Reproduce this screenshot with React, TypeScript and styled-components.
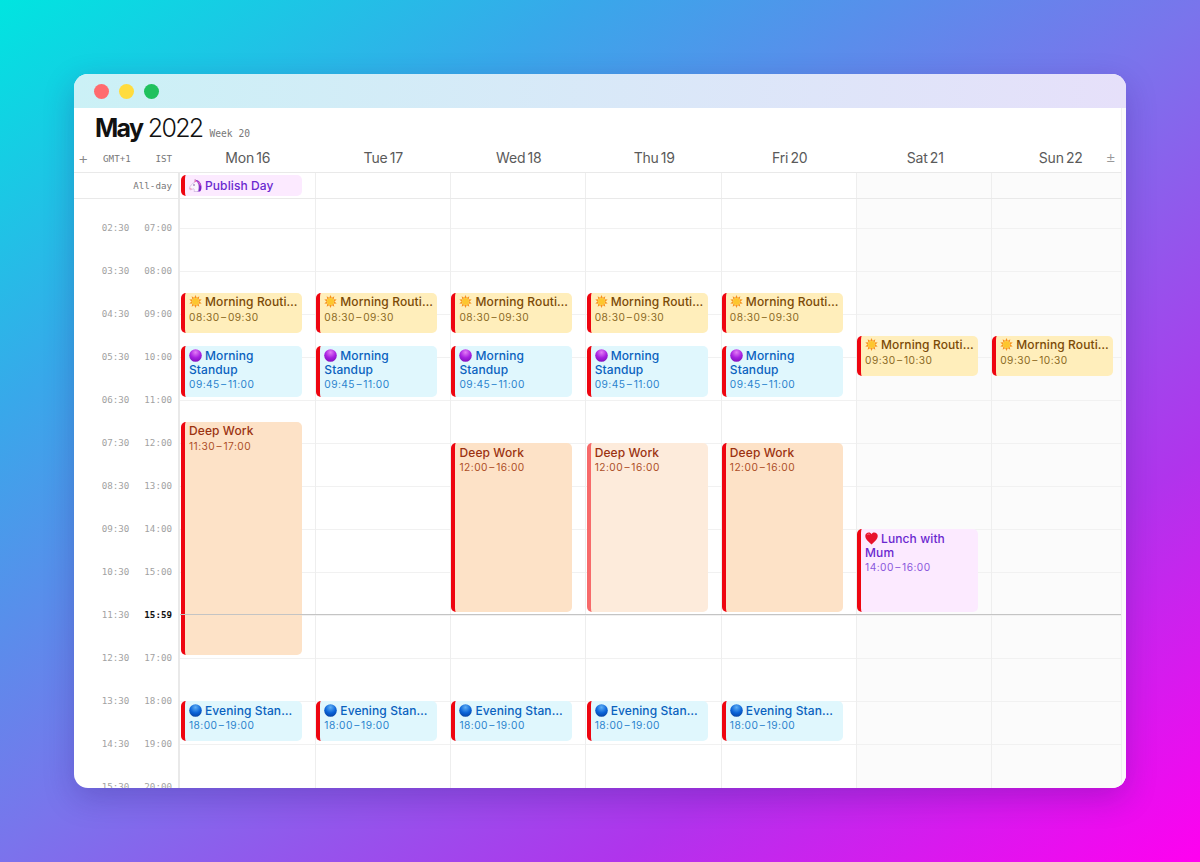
import React from "react";
import styled, { createGlobalStyle } from "styled-components";

const Global = createGlobalStyle`
  html, body { margin: 0; padding: 0; height: 100%; }
  body {
    width: 1200px; height: 862px; overflow: hidden;
    background: linear-gradient(145deg, #00e5e0 0%, #38a8ea 24%, #7a74ec 50%, #b034ec 76%, #ff00f0 100%);
    font-family: Inter, "Liberation Sans", sans-serif;
  }
`;
const Page = styled.div`
  width: 1200px; height: 862px; padding: 74px; box-sizing: border-box;
`;
const Win = styled.div`
  position: relative; width: 1052px; height: 714px; border-radius: 14px; overflow: hidden; background: #fff;
  display: flex; flex-direction: column;
  box-shadow: 0 10px 30px rgba(40, 20, 120, 0.25);
`;
const TitleBar = styled.div`
  height: 34px; flex: none; display: flex; align-items: center; gap: 10px; padding-left: 20px;
  background: linear-gradient(95deg, #cbf1f6, #e6e0fa);
`;
const Light = styled.span<{ $c: string }>`
  width: 15px; height: 15px; border-radius: 50%; background: ${(p) => p.$c};
`;
const Heading = styled.div`
  height: 37px; flex: none; display: flex; align-items: baseline; padding: 4px 0 0 21px; box-sizing: border-box;
  color: #111; font-size: 25px; line-height: 32px; letter-spacing: -1.7px;
`;
const Month = styled.span`font-weight: 700; margin-right: 5.5px;`;
const Year = styled.span`font-weight: 350;`;
const WeekNo = styled.span`
  font-family: "DejaVu Sans Mono", monospace; font-size: 9.6px; letter-spacing: 0; color: #777; margin-left: 7px;
`;
const HeaderRow = styled.div`
  height: 27px; flex: none; display: flex; border-bottom: 1px solid #e9e9e9; position: relative; overflow: hidden;
`;
const HeaderGutter = styled.div`
  width: 106px; flex: none; display: flex; align-items: center; justify-content: space-between;
  padding: 0 8px 1px 4px; box-sizing: border-box;
  font-family: "DejaVu Sans Mono", monospace; font-size: 9.2px; color: #777;
`;
const Pm = styled.span`
  font-family: Inter, sans-serif; font-size: 16px; font-weight: 300; color: #888; line-height: 14px;
`;
const Zone = styled.span<{ $m?: number }>`margin-left: ${(p) => p.$m ?? 0}px;`;
const DayName = styled.div`
  width: 135.5px; flex: none; text-align: center; font-size: 14px; line-height: 26px; color: #5a5a5a;
  letter-spacing: -0.2px; word-spacing: -1.5px;
`;
const Fold = styled.span`
  position: absolute; right: 10px; top: 75px; z-index: 5; font-size: 16px; line-height: 16px; color: #999; font-weight: 300;
`;
const AllDay = styled.div`
  height: 25px; flex: none; display: flex; border-bottom: 1px solid #e9e9e9; overflow: hidden;
`;
const AllDayLabel = styled.div`
  width: 106px; flex: none; box-sizing: border-box; padding: 0 6px 1px 0; text-align: right; border-right: 2px solid #e9e9e9;
  font-family: "DejaVu Sans Mono", monospace; font-size: 9.2px; line-height: 25px; color: #777;
`;
const AllDayCell = styled.div<{ $weekend?: boolean; $first?: boolean }>`
  width: ${(p) => (p.$first ? 136 : 135.2)}px; flex: none; box-sizing: border-box; border-right: 1px solid #eee; padding: 2px 0 0 1px;
  background: ${(p) => (p.$weekend ? "#fbfbfb" : "#fff")};
`;
const Body = styled.div`
  flex: 1; display: flex; overflow: hidden; min-height: 0;
`;
const Gutter = styled.div`
  width: 106px; flex: none; box-sizing: border-box; border-right: 2px solid #e9e9e9; padding-top: 7px;
`;
const TimeRow = styled.div`
  height: 43px; display: flex; justify-content: flex-end; gap: 15px; padding-right: 6px;
  font-family: "DejaVu Sans Mono", monospace; font-size: 9.2px; line-height: 43px; color: #a2a2a2;
`;
const Local = styled.span<{ $now?: boolean }>`
  color: ${(p) => (p.$now ? "#111" : "#a2a2a2")};
  font-weight: ${(p) => (p.$now ? 700 : 400)};
`;
const DayCol = styled.div<{ $weekend?: boolean; $first?: boolean }>`
  width: ${(p) => (p.$first ? 136 : 135.2)}px; flex: none; box-sizing: border-box; position: relative; border-right: 1px solid #eee;
  background-color: ${(p) => (p.$weekend ? "#fbfbfb" : "#fff")};
  background-image: repeating-linear-gradient(to bottom, transparent 0, transparent 42px, #f1f1f1 42px, #f1f1f1 43px);
  background-position: 0 -13px;
`;
const NowLine = styled.div`
  position: absolute; left: 106px; right: 4px; top: 415px; height: 1px; background: #c4c4c4; z-index: 3;
`;
const BodyWrap = styled.div`
  position: relative; flex: 1; display: flex; min-height: 0;
`;
const Gap = styled.div`
  position: absolute; top: 34px; bottom: 0; right: 0; width: 5px; background: #fcfcfc; border-left: 1px solid #f0f0f0; z-index: 4; box-sizing: border-box;
`;
const palette = {
  yellow: { bg: "#ffeebb", fg: "#7b4a06", sub: "#8c6a24" },
  blue: { bg: "#e0f7fd", fg: "#0a62bf", sub: "#2b83cd" },
  peach: { bg: "#fde2c7", fg: "#9b3210", sub: "#ad4f28" },
  purple: { bg: "#fceaff", fg: "#6a28cf", sub: "#8a58dc" },
};
type Tone = keyof typeof palette;
const Card = styled.div<{ $tone: Tone; $faded?: boolean; $abs?: boolean; $flat?: boolean; $first?: boolean }>`
  box-sizing: border-box; width: 121px; border-radius: 5px; overflow: hidden;
  border-left: 4.5px solid ${(p) => (p.$faded ? "#f76a6a" : "#ee0510")};
  padding: ${(p) => (p.$flat ? "3.5px" : "2.5px")} 4px 0 4px;
  background: ${(p) => (p.$faded ? "#fdebdb" : palette[p.$tone].bg)};
  ${(p) => (p.$flat ? "height: 21px;" : "")}
  ${(p) => (p.$abs ? `position: absolute; left: ${p.$first ? 1 : 0.3}px; z-index: 2;` : "")}
`;
const Title = styled.div<{ $tone: Tone; $nowrap?: boolean }>`
  font-size: 12px; line-height: 14px; font-weight: 500; letter-spacing: 0.1px;
  color: ${(p) => palette[p.$tone].fg};
  ${(p) => (p.$nowrap ? "white-space: nowrap; overflow: hidden; text-overflow: ellipsis;" : "")}
`;
const Sub = styled.div<{ $tone: Tone }>`
  font-size: 10.2px; line-height: 14.6px; letter-spacing: 0.45px; white-space: nowrap; margin-top: 0.5px;
  color: ${(p) => palette[p.$tone].sub};
`;
const Glyph = styled.svg`
  width: 13px; height: 13px; vertical-align: -2px; margin-right: 3px;
`;

type IconName = "sun" | "purple" | "blue" | "heart" | "unicorn";
function Icon({ name }: { name: IconName }) {
  const id = `g-${name}`;
  if (name === "sun")
    return (
      <Glyph viewBox="0 0 26 26">
        <g fill="#f7941d">
          {Array.from({ length: 10 }).map((_, i) => (
            <path key={i} d="M13 0l2.6 6h-5.2z" transform={`rotate(${i * 36} 13 13)`} />
          ))}
        </g>
        <circle cx="13" cy="13" r="7" fill="#fdc62e" />
      </Glyph>
    );
  if (name === "purple" || name === "blue")
    return (
      <Glyph viewBox="0 0 26 26">
        <defs>
          <radialGradient id={id} cx="50%" cy="25%" r="80%">
            <stop offset="0" stopColor={name === "purple" ? "#e37cf5" : "#5fb0f5"} />
            <stop offset="0.55" stopColor={name === "purple" ? "#a61fe0" : "#0a63d8"} />
            <stop offset="1" stopColor={name === "purple" ? "#7c12b8" : "#053f9e"} />
          </radialGradient>
        </defs>
        <circle cx="13" cy="13" r="12.6" fill={`url(#${id})`} />
      </Glyph>
    );
  if (name === "heart")
    return (
      <Glyph viewBox="0 0 26 26">
        <path d="M13 25C5 18 .5 13.5 .5 8 .5 3.5 4 1 7.5 1c2.5 0 4.500 1.300 5.500 3.500C14 2.300 16 1 18.500 1 22 1 25.500 3.500 25.500 8c0 5.500-4.500 10-12.500 17z" fill="#e8112d" />
        <path d="M5 5c1-1 3-1.500 4-.5" stroke="#ff8a95" strokeWidth="1.6" fill="none" strokeLinecap="round" />
      </Glyph>
    );
  return (
    <Glyph viewBox="0 0 26 26">
      <path d="M14 2C21 3 25 9 25 16c0 4-1 7-3 9h-6C19 20 19 12 14 8z" fill="#7b1fc8" />
      <path d="M17 5c3 1 5 4 6 8" stroke="#e05fc8" strokeWidth="2.4" fill="none" />
      <path d="M15 5L12 0l-1 7C6 9 2 14 1 18c-.5 2 1 4 3 3.5l5-2c2 1 2 3 1 5.500h8C21 17 20 9 15 5z" fill="#fbf6fd" stroke="#b89ad2" strokeWidth="1" />
      <path d="M12 0l-1 7 4-2z" fill="#f06fb0" />
      <path d="M1 18c-.5 2 1 4 3 3.5l2-1c-1-2-3-3.500-5-2.500z" fill="#f5a8c8" />
      <circle cx="10" cy="12" r="1.4" fill="#5b2a86" />
    </Glyph>
  );
}

type Ev = { start: number; end: number; tone: Tone; icon?: IconName; title: string; time: string; nowrap?: boolean; faded?: boolean };
const routine: Ev = { start: 8.5, end: 9.5, tone: "yellow", icon: "sun", title: "Morning Routine", time: "08:30\u200a–\u200a09:30", nowrap: true };
const routineLate: Ev = { start: 9.5, end: 10.5, tone: "yellow", icon: "sun", title: "Morning Routine", time: "09:30\u200a–\u200a10:30", nowrap: true };
const standup: Ev = { start: 9.75, end: 11, tone: "blue", icon: "purple", title: "Morning Standup", time: "09:45\u200a–\u200a11:00" };
const evening: Ev = { start: 18, end: 19, tone: "blue", icon: "blue", title: "Evening Standup", time: "18:00\u200a–\u200a19:00", nowrap: true };
const deep: Ev = { start: 12, end: 16, tone: "peach", title: "Deep Work", time: "12:00\u200a–\u200a16:00" };

const days: { name: string; weekend?: boolean; events: Ev[] }[] = [
  { name: "Mon 16", events: [routine, standup, { ...deep, start: 11.5, end: 17, time: "11:30\u200a–\u200a17:00" }, evening] },
  { name: "Tue 17", events: [routine, standup, evening] },
  { name: "Wed 18", events: [routine, standup, deep, evening] },
  { name: "Thu 19", events: [routine, standup, { ...deep, faded: true }, evening] },
  { name: "Fri 20", events: [routine, standup, deep, evening] },
  { name: "Sat 21", weekend: true, events: [routineLate, { start: 14, end: 16, tone: "purple", icon: "heart", title: "Lunch with Mum", time: "14:00\u200a–\u200a16:00" }] },
  { name: "Sun 22", weekend: true, events: [routineLate] },
];
const HOUR = 43;
const ORIGIN = 29 - 7 * HOUR;
const top = (h: number) => ORIGIN + h * HOUR;

const times: [string, string][] = [
  ["02:30", "07:00"], ["03:30", "08:00"], ["04:30", "09:00"], ["05:30", "10:00"], ["06:30", "11:00"],
  ["07:30", "12:00"], ["08:30", "13:00"], ["09:30", "14:00"], ["10:30", "15:00"], ["11:30", "15:59"],
  ["12:30", "17:00"], ["13:30", "18:00"], ["14:30", "19:00"], ["15:30", "20:00"],
];

export default function App() {
  return (
    <Page>
      <Global />
      <Win>
        <TitleBar>
          <Light $c="#ff6b6e" />
          <Light $c="#ffdc3e" />
          <Light $c="#1fc15e" />
        </TitleBar>
        <Heading>
          <Month>May</Month>
          <Year>2022</Year>
          <WeekNo>Week 20</WeekNo>
        </Heading>
        <HeaderRow>
          <HeaderGutter>
            <Pm>+</Pm>
            <Zone $m={4}>GMT+1</Zone>
            <Zone $m={14}>IST</Zone>
          </HeaderGutter>
          {days.map((d) => (
            <DayName key={d.name}>{d.name}</DayName>
          ))}
        </HeaderRow>
        <AllDay>
          <AllDayLabel>All-day</AllDayLabel>
          {days.map((d, i) => (
            <AllDayCell key={d.name} $weekend={d.weekend} $first={i === 0}>
              {i === 0 && (
                <Card $tone="purple" $flat>
                  <Title $tone="purple" $nowrap>
                    <Icon name="unicorn" />
                    Publish Day
                  </Title>
                </Card>
              )}
            </AllDayCell>
          ))}
        </AllDay>
        <BodyWrap>
          <Body>
            <Gutter>
              {times.map(([a, b]) => (
                <TimeRow key={a}>
                  <span>{a}</span>
                  <Local $now={b === "15:59"}>{b}</Local>
                </TimeRow>
              ))}
            </Gutter>
            {days.map((d, i) => (
              <DayCol key={d.name} $weekend={d.weekend} $first={i === 0}>
                {d.events.map((e) => (
                  <Card
                    key={e.title + e.start}
                    $abs
                    $first={i === 0}
                    $tone={e.tone}
                    $faded={e.faded}
                    style={{ top: top(e.start), height: (e.end - e.start) * HOUR - 3 }}
                  >
                    <Title $tone={e.tone} $nowrap={e.nowrap}>
                      {e.icon && <Icon name={e.icon} />}
                      {e.title}
                    </Title>
                    <Sub $tone={e.tone}>{e.time}</Sub>
                  </Card>
                ))}
              </DayCol>
            ))}
          </Body>
          <NowLine />
        </BodyWrap>
        <Gap />
        <Fold>±</Fold>
      </Win>
    </Page>
  );
}
